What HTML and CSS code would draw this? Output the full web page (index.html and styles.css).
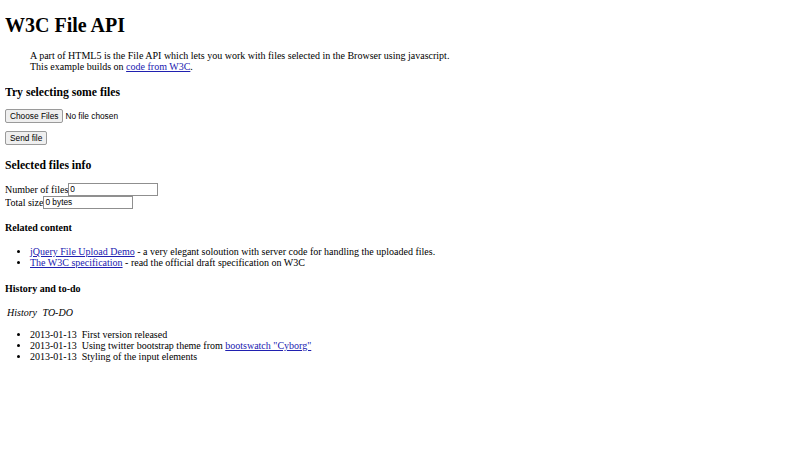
FILE: index.html
```html
<!DOCTYPE html>
<html lang="en">

<head>
    <meta charset="UTF-8">
    <meta name="viewport" content="width=device-width, initial-scale=1.0">
    <title>W3C File API</title>
    <link rel="stylesheet" href="styles.css">
</head>

<body>

    <h1>W3C File API</h1>

    <blockquote>
        A part of HTML5 is the File API which lets you work with files selected in the Browser using javascript.<br>
        This example builds on <a href="#">code from W3C</a>.
    </blockquote>

    <h3>Try selecting some files</h3>

    <form>
        <p><input type="file" id="files" multiple></p>
        <p><button type="button">Send file</button></p>
    </form>

    <h3>Selected files info</h3>

    <div class="info">
        <label for="file-count">Number of files</label><input type="text" id="file-count" value="0"><br>
        <label for="file-size">Total size</label><input type="text" id="file-size" value="0 bytes">
    </div>

    <h4>Related content</h4>

    <ul>
        <li><a href="#">jQuery File Upload Demo</a> - a very elegant soloution with server code for handling the uploaded files.</li>
        <li><a href="#">The W3C specification</a> - read the official draft specification on W3C</li>
    </ul>

    <h4 class="history">History and to-do</h4>

    <div class="tabs">
        <span>History</span>
        <span>TO-DO</span>
    </div>

    <ul>
        <li>2013-01-13&nbsp; First version released</li>
        <li>2013-01-13&nbsp; Using twitter bootstrap theme from <a href="#">bootswatch "Cyborg"</a></li>
        <li>2013-01-13&nbsp; Styling of the input elements</li>
    </ul>

</body>

</html>
```

FILE: styles.css
```css
/* Basic styling */
body {
    margin: 5px;
    font-family: "Liberation Serif", serif;
    font-size: 10px;
    color: #000;
    background-color: #fff;
}

a {
    color: #2020b0;
}

h1 {
    font-size: 20px;
    margin: 9px 0 13px;
}

h3 {
    font-size: 11.7px;
    margin: 13.7px 0 10px;
}

h4 {
    font-size: 10px;
    margin: 13px 0;
}

h4.history {
    margin-top: 15px;
}

blockquote {
    margin: 10px 25px 14px;
}

p {
    margin: 8px 0;
}

ul {
    margin: 10px 0;
    padding-left: 25px;
}

/* Form controls */
input,
button {
    font-family: "Liberation Sans", Arial, sans-serif;
    font-size: 8.3px;
}

button,
input[type="file"]::file-selector-button {
    padding: 1px 4px;
    border: 1px solid #9a9a9a;
    border-radius: 2px;
    background-color: #efefef;
    color: #000;
}

input[type="file"]::file-selector-button {
    margin-right: 2px;
}

.info {
    margin-top: 11px;
}

.info input {
    box-sizing: border-box;
    width: 90px;
    height: 13px;
    padding: 0 1px;
    border: 1px solid #8f8f8f;
    margin: 0;
    vertical-align: baseline;
}

.tabs {
    font-style: italic;
    margin: 10px 0 11px;
    padding-left: 2px;
}

.tabs span {
    margin-right: 3px;
}
```
